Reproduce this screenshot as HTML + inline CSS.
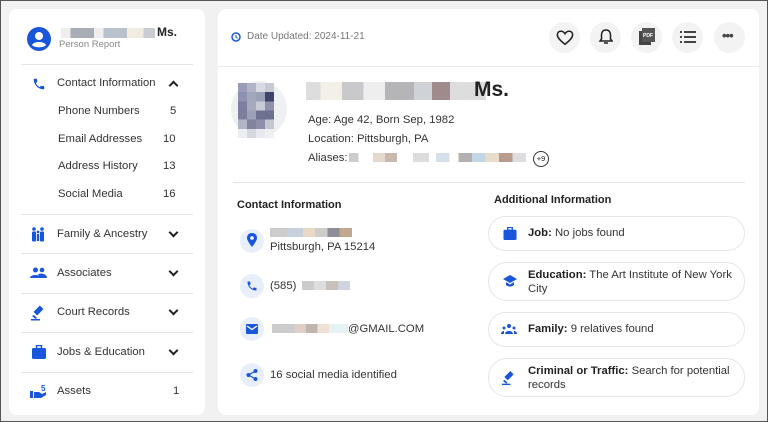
<!DOCTYPE html>
<html><head><style>
*{margin:0;padding:0;box-sizing:border-box}
body{width:768px;height:422px;background:#f1f1f1;font-family:"Liberation Sans",sans-serif;color:#222;position:relative;overflow:hidden;border:1px solid #555}
.card{position:absolute;background:#fff;border-radius:8px}
.a{position:absolute;white-space:nowrap}
.t{font-size:11.3px;color:#333}
.hr{position:absolute;height:1px;background:#e4e4e4}
.b{position:absolute;background:#c8c9cf}
.ch{position:absolute;width:7px;height:7px;border-right:2px solid #222;border-bottom:2px solid #222;transform:rotate(45deg)}
.btn{position:absolute;width:31px;height:31px;border-radius:50%;background:#f3f3f3;top:21px}
.ic{position:absolute;width:24px;height:24px;border-radius:50%;background:#e9eefb}
.pill{position:absolute;left:487px;width:257px;border:1px solid #e6e6e6;border-radius:19px}
</style></head><body>
<div class="card" style="left:8px;top:8px;width:196px;height:406px"></div>
<div class="card" style="left:217px;top:8px;width:541px;height:406px"></div>

<svg class="a" style="left:26px;top:26px" width="24" height="24" viewBox="0 0 24 24"><circle cx="12" cy="12" r="12" fill="#1a56db"/><circle cx="12" cy="9" r="4" fill="#fff"/><path d="M5 18c2-4 12-4 14 0c-2 3-12 3-14 0z" fill="#fff"/></svg>
<div class="b" style="left:60px;top:27px;width:94px;height:10px;background:linear-gradient(90deg,#eee 0 10%,#a8acb5 10% 35%,#eee 35% 45%,#b9c2cc 45% 70%,#f1ece2 70% 88%,#c9ccd2 88%)"></div>
<div class="a" style="left:156px;top:24px;font-weight:bold;font-size:12px">Ms.</div>
<div class="a" style="left:58px;top:38px;font-size:9.5px;color:#888">Person Report</div>
<div class="hr" style="left:20px;top:63px;width:172px"></div>

<svg class="a" style="left:31px;top:76px" width="14" height="14" viewBox="0 0 24 24"><path fill="#1a56db" d="M6.6 10.8c1.4 2.8 3.8 5.1 6.6 6.6l2.2-2.2c.3-.3.7-.4 1-.2 1.1.4 2.3.6 3.6.6.6 0 1 .4 1 1V20c0 .6-.4 1-1 1C10.6 21 3 13.4 3 4c0-.6.4-1 1-1h3.5c.6 0 1 .4 1 1 0 1.3.2 2.5.6 3.6.1.3 0 .7-.2 1z"/></svg>
<div class="a t" style="left:56px;top:76px">Contact Information</div>
<div class="ch" style="left:169px;top:81px;transform:rotate(225deg)"></div>
<div class="a t" style="left:57px;top:104px">Phone Numbers</div><div class="a t" style="left:169px;top:104px">5</div>
<div class="a t" style="left:57px;top:132px">Email Addresses</div><div class="a t" style="left:162px;top:132px">10</div>
<div class="a t" style="left:57px;top:159px">Address History</div><div class="a t" style="left:162px;top:159px">13</div>
<div class="a t" style="left:57px;top:187px">Social Media</div><div class="a t" style="left:162px;top:187px">16</div>
<div class="hr" style="left:20px;top:213px;width:172px"></div>

<svg class="a" style="left:29px;top:225px" width="16" height="16" viewBox="0 0 16 16" fill="#1a56db"><circle cx="4" cy="3" r="1.8"/><circle cx="12" cy="3" r="1.8"/><circle cx="8" cy="6" r="1.4"/><rect x="2" y="5.5" width="4" height="10" rx="1"/><rect x="10" y="5.5" width="4" height="10" rx="1"/><rect x="6.8" y="8" width="2.4" height="7"/></svg>
<div class="a t" style="left:56px;top:227px">Family &amp; Ancestry</div><div class="ch" style="left:169px;top:228px"></div>
<div class="hr" style="left:20px;top:252px;width:172px"></div>
<svg class="a" style="left:29px;top:266px" width="17" height="12" viewBox="0 0 17 12" fill="#1a56db"><circle cx="5.5" cy="3" r="2.5"/><circle cx="12" cy="3" r="2.3"/><path d="M0 11c0-4 11-4 11 0zM9 11c0-2 0-3-1-4 4-1 9 0 9 4z"/></svg>
<div class="a t" style="left:56px;top:266px">Associates</div><div class="ch" style="left:169px;top:267px"></div>
<div class="hr" style="left:20px;top:292px;width:172px"></div>
<svg class="a" style="left:29px;top:304px" width="17" height="16" viewBox="0 0 17 16" fill="#1a56db"><rect x="6" y="1" width="5" height="9" transform="rotate(45 8.5 5.5)"/><path d="M4 10l3 3-1.5 1L2 11z"/><rect x="1" y="14" width="9" height="1.5"/></svg>
<div class="a t" style="left:56px;top:305px">Court Records</div><div class="ch" style="left:169px;top:306px"></div>
<div class="hr" style="left:20px;top:331px;width:172px"></div>
<svg class="a" style="left:31px;top:344px" width="14" height="14" viewBox="0 0 14 14" fill="#1a56db"><rect x="0" y="3" width="14" height="11" rx="1.5"/><rect x="4.5" y="0.5" width="5" height="3" fill="none" stroke="#1a56db" stroke-width="1.4"/></svg>
<div class="a t" style="left:56px;top:345px">Jobs &amp; Education</div><div class="ch" style="left:169px;top:346px"></div>
<div class="hr" style="left:20px;top:371px;width:172px"></div>
<svg class="a" style="left:29px;top:382px" width="18" height="16" viewBox="0 0 18 16" fill="#1a56db"><rect x="0" y="8" width="3" height="7"/><path d="M4 9h5l3 2 4-2v3l-5 3H4z"/><text x="11" y="8" font-size="8" font-weight="bold" font-family="Liberation Sans">5</text></svg>
<div class="a t" style="left:56px;top:384px">Assets</div><div class="a t" style="left:172px;top:384px">1</div>

<svg class="a" style="left:230px;top:31px" width="10" height="10" viewBox="0 0 10 10"><circle cx="5" cy="5" r="4" fill="none" stroke="#1a56db" stroke-width="1.5"/><path d="M5 3v2.3l1.5 1" stroke="#1a56db" fill="none"/></svg>
<div class="a" style="left:246px;top:30px;font-size:10px;color:#777">Date Updated: 2024-11-21</div>
<div class="btn" style="left:548px"></div><div class="btn" style="left:589px"></div><div class="btn" style="left:630px"></div><div class="btn" style="left:671px"></div><div class="btn" style="left:713px"></div>
<svg class="a" style="left:555px;top:28px" width="18" height="17" viewBox="0 0 24 22"><path d="M12 20C4 14 1 10 2 6c1-4 7-5 10 0 3-5 9-4 10 0 1 4-2 8-10 14z" fill="none" stroke="#222" stroke-width="2"/></svg>
<svg class="a" style="left:598px;top:27px" width="14" height="17" viewBox="0 0 14 17"><path d="M7 2c-3 0-4.5 2-4.5 5v4L1 13h12l-1.5-2V7C11.5 4 10 2 7 2z" fill="none" stroke="#222" stroke-width="1.5"/><path d="M5 15h4" stroke="#222" stroke-width="1.5"/></svg>
<svg class="a" style="left:638px;top:27px" width="16" height="17" viewBox="0 0 16 17"><rect x="0" y="3" width="12" height="14" fill="#444"/><rect x="3" y="0" width="13" height="14" fill="#555"/><text x="4" y="9" font-size="5" fill="#fff" font-weight="bold" font-family="Liberation Sans">PDF</text></svg>
<svg class="a" style="left:679px;top:30px" width="16" height="12" viewBox="0 0 16 12" fill="#444"><rect x="0" y="0" width="2" height="2"/><rect x="4" y="0" width="12" height="2"/><rect x="0" y="5" width="2" height="2"/><rect x="4" y="5" width="12" height="2"/><rect x="0" y="10" width="2" height="2"/><rect x="4" y="10" width="12" height="2"/></svg>
<div class="a" style="left:721px;top:27px;font-size:13px;font-weight:bold;letter-spacing:-1px;color:#444">•••</div>
<div class="hr" style="left:217px;top:65px;width:541px;background:#ededed"></div>

<div class="a" style="left:230px;top:80px;width:56px;height:56px;border-radius:50%;background:#eef0f2"></div>
<svg class="a" style="left:237px;top:82px" width="36" height="55" viewBox="0 0 4 6" preserveAspectRatio="none" shape-rendering="crispEdges">
<rect x="0" y="0" width="1" height="1" fill="#9a9cb8"/><rect x="1" y="0" width="1" height="1" fill="#b0b4c6"/><rect x="2" y="0" width="1" height="1" fill="#d8dae2"/><rect x="3" y="0" width="1" height="1" fill="#c7c9d4"/>
<rect x="0" y="1" width="1" height="1" fill="#8d92b0"/><rect x="1" y="1" width="1" height="1" fill="#a3a7bd"/><rect x="2" y="1" width="1" height="1" fill="#9aa0b8"/><rect x="3" y="1" width="1" height="1" fill="#3f4468"/>
<rect x="0" y="2" width="1" height="1" fill="#7b80a0"/><rect x="1" y="2" width="1" height="1" fill="#a5a9bc"/><rect x="2" y="2" width="1" height="1" fill="#c8cad4"/><rect x="3" y="2" width="1" height="1" fill="#8e92ad"/>
<rect x="0" y="3" width="1" height="1" fill="#7a7f9c"/><rect x="1" y="3" width="1" height="1" fill="#9da1b6"/><rect x="2" y="3" width="1" height="1" fill="#6e7290"/><rect x="3" y="3" width="1" height="1" fill="#6d7190"/>
<rect x="0" y="4" width="1" height="1" fill="#b2b5c6"/><rect x="1" y="4" width="1" height="1" fill="#80849f"/><rect x="2" y="4" width="1" height="1" fill="#8d90a8"/><rect x="3" y="4" width="1" height="1" fill="#c5c7d2"/>
<rect x="0" y="5" width="1" height="1" fill="#eceef2"/><rect x="1" y="5" width="1" height="1" fill="#d6d8e0"/><rect x="2" y="5" width="1" height="1" fill="#e8e9ee"/><rect x="3" y="5" width="1" height="1" fill="#eef0f2"/></svg>
<div class="a" style="left:305px;top:81px;width:180px;height:18px;background:linear-gradient(90deg,#ddd 0 8%,#f3f0e8 8% 20%,#c9c9cc 20% 32%,#eee 32% 44%,#b5b5b8 44% 60%,#cfd3d8 60% 70%,#9f8b8b 70% 80%,#ddd 80%)"></div>
<div class="a" style="left:473px;top:77px;font-weight:bold;font-size:21px">Ms.</div>
<div class="a t" style="left:307px;top:113px">Age: Age 42, Born Sep, 1982</div>
<div class="a t" style="left:307px;top:132px">Location: Pittsburgh, PA</div>
<div class="a t" style="left:307px;top:151px">Aliases:</div>
<div class="a" style="left:348px;top:152px;width:80px;height:9px;background:linear-gradient(90deg,#ccc 0 12%,#fff 12% 30%,#e5d8cc 30% 45%,#c9b8b0 45% 60%,#fff 60% 80%,#ddd 80%)"></div>
<div class="a" style="left:435px;top:152px;width:90px;height:9px;background:linear-gradient(90deg,#d6e0ea 0 15%,#fff 15% 25%,#b4b0b0 25% 40%,#c4d6e6 40% 55%,#e8ddcc 55% 70%,#b99a8c 70% 85%,#ddd 85%)"></div>
<div class="a" style="left:532px;top:150px;width:16px;height:16px;border:1px solid #333;border-radius:50%;font-size:7.5px;text-align:center;line-height:14px">+9</div>
<div class="hr" style="left:232px;top:181px;width:512px"></div>

<div class="a" style="left:236px;top:198px;font-size:11px;font-weight:bold">Contact Information</div>
<div class="ic" style="left:239px;top:228px"></div>
<svg class="a" style="left:246px;top:232px" width="10" height="14" viewBox="0 0 10 14"><path d="M5 0C2 0 0 2 0 5c0 3 5 9 5 9s5-6 5-9c0-3-2-5-5-5z" fill="#1a56db"/><circle cx="5" cy="5" r="1.8" fill="#fff"/></svg>
<div class="a" style="left:269px;top:227px;width:82px;height:9px;background:linear-gradient(90deg,#ccc 0 20%,#c9d0dd 20% 40%,#e8d8c4 40% 55%,#ccc 55% 70%,#8e8e96 70% 85%,#c2a88f 85%)"></div>
<div class="a t" style="left:269px;top:240px">Pittsburgh, PA 15214</div>
<div class="ic" style="left:239px;top:273px"></div>
<svg class="a" style="left:245px;top:279px" width="12" height="12" viewBox="0 0 24 24"><path fill="#1a56db" d="M6.6 10.8c1.4 2.8 3.8 5.1 6.6 6.6l2.2-2.2c.3-.3.7-.4 1-.2 1.1.4 2.3.6 3.6.6.6 0 1 .4 1 1V20c0 .6-.4 1-1 1C10.6 21 3 13.4 3 4c0-.6.4-1 1-1h3.5c.6 0 1 .4 1 1 0 1.3.2 2.5.6 3.6.1.3 0 .7-.2 1z"/></svg>
<div class="a t" style="left:269px;top:279px">(585)</div>
<div class="a" style="left:301px;top:280px;width:48px;height:9px;background:linear-gradient(90deg,#ccc 0 25%,#ddd 25% 50%,#c9c0ba 50% 75%,#d0d4de 75%)"></div>
<div class="ic" style="left:239px;top:316px"></div>
<svg class="a" style="left:245px;top:323px" width="12" height="10" viewBox="0 0 12 10"><rect width="12" height="10" rx="1" fill="#1a56db"/><path d="M1 2l5 3.5L11 2" stroke="#fff" fill="none" stroke-width="1.3"/></svg>
<div class="a" style="left:271px;top:323px;width:76px;height:9px;background:linear-gradient(90deg,#ccc 0 30%,#e0cfc4 30% 45%,#c0b4ae 45% 60%,#f0e1d6 60% 75%,#e6f2f4 75%)"></div>
<div class="a t" style="left:347px;top:322px">@GMAIL.COM</div>
<div class="ic" style="left:239px;top:362px"></div>
<svg class="a" style="left:245px;top:368px" width="12" height="12" viewBox="0 0 12 12" fill="#1a56db"><circle cx="9.5" cy="2" r="2"/><circle cx="2.5" cy="6" r="2"/><circle cx="9.5" cy="10" r="2"/><path d="M9.5 2L2.5 6l7 4" stroke="#1a56db" stroke-width="1.2" fill="none"/></svg>
<div class="a t" style="left:269px;top:368px">16 social media identified</div>

<div class="a" style="left:493px;top:193px;font-size:11px;font-weight:bold">Additional Information</div>
<div class="pill" style="top:215px;height:35px"></div>
<svg class="a" style="left:502px;top:226px" width="14" height="13" viewBox="0 0 14 14" fill="#1a56db"><rect x="0" y="3" width="14" height="11" rx="1.5"/><rect x="4.5" y="0.5" width="5" height="3" fill="none" stroke="#1a56db" stroke-width="1.4"/></svg>
<div class="a t" style="left:527px;top:226px"><b style="color:#222">Job:</b> No jobs found</div>
<div class="pill" style="top:261px;height:39px"></div>
<svg class="a" style="left:502px;top:274px" width="14" height="13" viewBox="0 0 14 13" fill="#1a56db"><path d="M7 0L14 4 7 8 0 4z"/><path d="M3 7v3c2 2 6 2 8 0V7L7 9.5z"/></svg>
<div class="a t" style="left:527px;top:267px;line-height:14px"><b style="color:#222">Education:</b> The Art Institute of New York<br>City</div>
<div class="pill" style="top:311px;height:35px"></div>
<svg class="a" style="left:500px;top:323px" width="16" height="10" viewBox="0 0 16 10" fill="#1a56db"><circle cx="8" cy="2" r="2"/><circle cx="3" cy="4" r="1.5"/><circle cx="13" cy="4" r="1.5"/><path d="M4 10c0-4 8-4 8 0zM0 10c0-3 3-3 3-3v3zM16 10c0-3-3-3-3-3v3z"/></svg>
<div class="a t" style="left:527px;top:322px"><b style="color:#222">Family:</b> 9 relatives found</div>
<div class="pill" style="top:357px;height:39px"></div>
<svg class="a" style="left:500px;top:369px" width="16" height="16" viewBox="0 0 17 16" fill="#1a56db"><rect x="6" y="1" width="5" height="9" transform="rotate(45 8.5 5.5)"/><path d="M4 10l3 3-1.5 1L2 11z"/><rect x="1" y="14" width="9" height="1.5"/></svg>
<div class="a t" style="left:527px;top:363px;line-height:14px"><b style="color:#222">Criminal or Traffic:</b> Search for potential<br>records</div>
</body></html>
